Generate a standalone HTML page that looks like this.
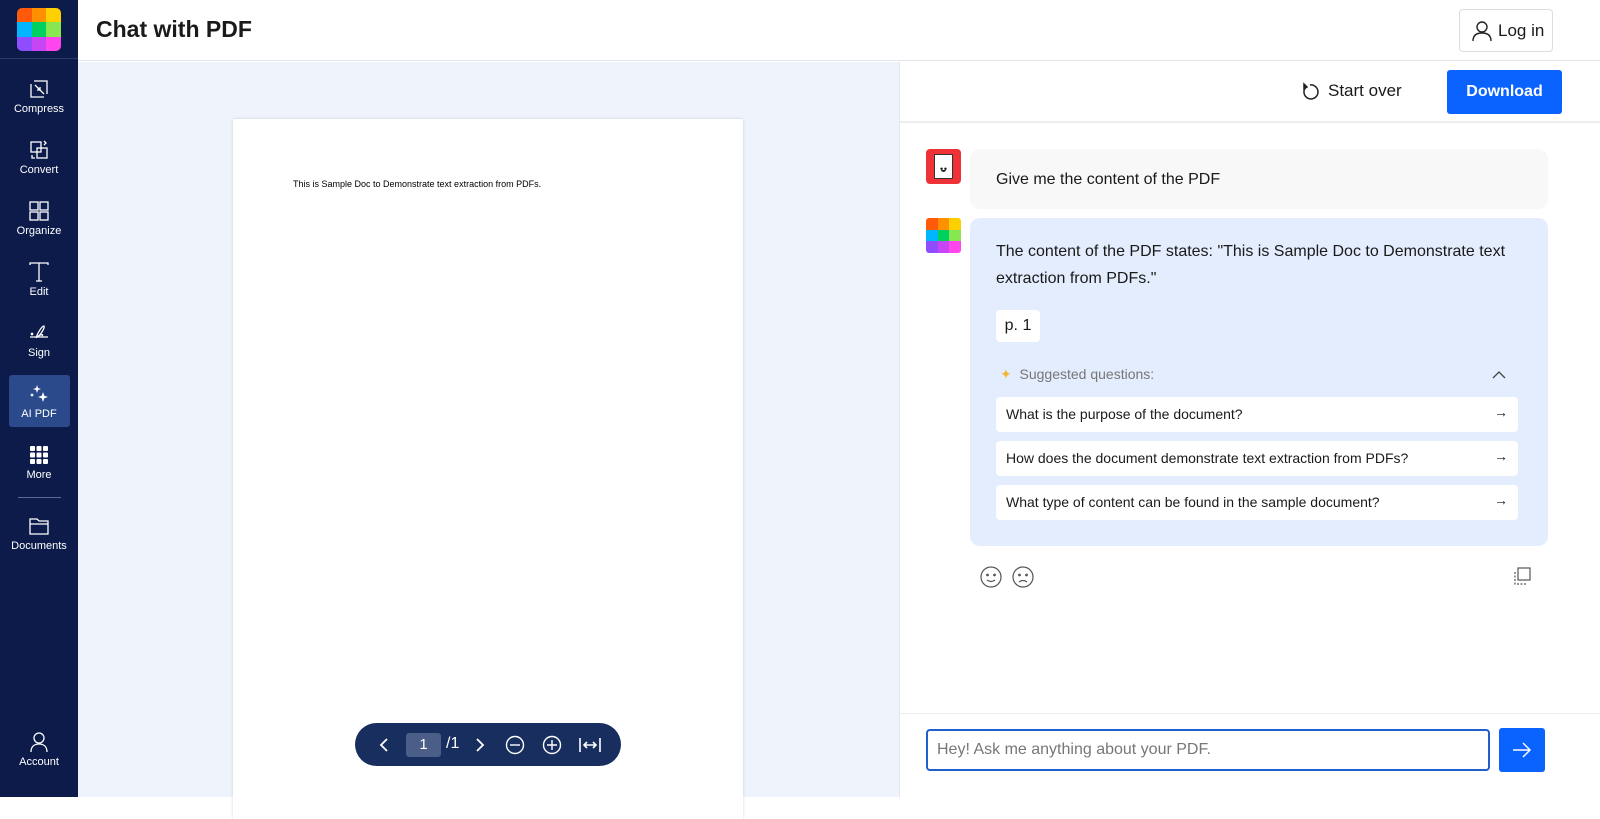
<!DOCTYPE html>
<html><head><meta charset="utf-8"><style>
*{box-sizing:border-box;margin:0;padding:0}
body{width:1600px;height:797px;overflow:hidden;font-family:"Liberation Sans",sans-serif;background:#fff;position:relative;color:#1a1a1a}
.sb{position:absolute;left:0;top:0;width:78px;height:797px;background:#0d1b4b;color:#fff}
.logo{position:absolute;left:17px;top:8px;width:44px;height:43px;border-radius:5px;overflow:hidden;display:grid;grid-template-columns:repeat(3,1fr)}
.sbline{position:absolute;left:0;top:58px;width:78px;height:1px;background:#2a3a6a}
.it{position:absolute;left:0;width:78px;text-align:center;font-size:11px}
.it svg{display:block;margin:0 auto 3px}
.act{position:absolute;left:9px;top:375px;width:61px;height:52px;background:#2b4a8c;border-radius:3px}
.hdr{position:absolute;left:78px;top:0;right:0;height:61px;background:#fff;border-bottom:1px solid #e3e6ec}
.hdr h1{position:absolute;left:18px;top:16px;font-size:23px;font-weight:bold}
.login{position:absolute;right:47px;top:9px;width:94px;height:43px;border:1px solid #ddd;border-radius:4px;font-size:17px;padding:11px 0 0 38px}
.view{position:absolute;left:78px;top:62px;width:821px;height:735px;background:#eff4fc}
.page{position:absolute;left:155px;top:57px;width:510px;height:700px;background:#fff;box-shadow:0 0 3px rgba(0,0,0,.15)}
.page p{position:absolute;left:60px;top:60px;font-size:9px;color:#000}
.tb{position:absolute;left:277px;top:661px;width:266px;height:43px;border-radius:22px;background:#172e5e;color:#fff}
.rp{position:absolute;left:899px;top:62px;right:0;height:735px;background:#fff;border-left:1px solid #e3e6ec}
.bar{position:absolute;left:0;top:0;right:0;height:61px;border-bottom:2px solid #eceef2}
.dl{position:absolute;left:547px;top:8px;width:115px;height:44px;background:#0a62ff;border-radius:3px;color:#fff;font-weight:bold;font-size:16px;text-align:center;line-height:44px}
.so{position:absolute;left:428px;top:19px;font-size:17px}
.msg1{position:absolute;left:70px;top:87px;width:578px;height:60px;background:#f8f8f8;border-radius:10px;font-size:16px;padding:22px 26px}
.msg2{position:absolute;left:70px;top:156px;width:578px;height:328px;background:#e3edfd;border-radius:10px;font-size:16px}
.q{position:absolute;left:26px;width:522px;height:35px;background:#fff;border-radius:4px;font-size:14px;padding:9px 10px}
.q span{position:absolute;right:10px;top:7px}
.inp{position:absolute;left:26px;top:667px;width:564px;height:42px;border:2px solid #1f5fd0;border-radius:4px;font-size:16px;color:#777;padding:10px 9px}
.send{position:absolute;left:599px;top:666px;width:46px;height:44px;background:#0a62ff;border-radius:3px}
.foot{position:absolute;left:0;top:651px;right:0;height:1px;background:#eceef2}
</style></head><body>
<div class="sb">
<div class="logo"><i style="background:#ff5a0a"></i><i style="background:#ff9000"></i><i style="background:#ffd000"></i><i style="background:#00b6ff"></i><i style="background:#00d060"></i><i style="background:#88e650"></i><i style="background:#8f4dff"></i><i style="background:#c845f5"></i><i style="background:#ff45ee"></i></div>
<div class="sbline"></div>
<div class="act"></div>
<div class="it" style="top:78px"><svg width="22" height="22" viewBox="0 0 22 22" fill="none" stroke="#fff" stroke-width="1.3"><path d="M3 6V19H16M6 3H19V16M7 7L12 12M12 9V12H9M16 16L11 11"/></svg>Compress</div>
<div class="it" style="top:139px"><svg width="22" height="22" viewBox="0 0 22 22" fill="none" stroke="#fff" stroke-width="1.3"><rect x="3" y="3" width="10" height="10"/><rect x="9" y="9" width="10" height="10"/><path d="M16 2L18 4L16 6M4 16L4 19H7"/></svg>Convert</div>
<div class="it" style="top:200px"><svg width="22" height="22" viewBox="0 0 22 22" fill="none" stroke="#fff" stroke-width="1.3"><rect x="2" y="2" width="8" height="8"/><rect x="12" y="2" width="8" height="8"/><rect x="2" y="12" width="8" height="8"/><rect x="12" y="12" width="8" height="8"/></svg>Organize</div>
<div class="it" style="top:261px"><svg width="22" height="22" viewBox="0 0 22 22" fill="none" stroke="#fff" stroke-width="1.3"><path d="M2 4V2H20V4M11 2V20M8 20H14"/></svg>Edit</div>
<div class="it" style="top:322px"><svg width="22" height="22" viewBox="0 0 22 22" fill="none" stroke="#fff" stroke-width="1.3"><path d="M2 15H20M3 11L5 13M5 11L3 13M8 16C10 10 14 4 16 4C17 6 12 14 9 15C13 12 16 12 14 14"/></svg>Sign</div>
<div class="it" style="top:383px"><svg width="22" height="22" viewBox="0 0 22 22" fill="#fff"><path d="M9 2l1 3 3 1-3 1-1 3-1-3-3-1 3-1zM15 9l1.3 3.7 3.7 1.3-3.7 1.3L15 19l-1.3-3.7L10 14l3.7-1.3zM4 10l.7 1.3L6 12l-1.3.7L4 14l-.7-1.3L2 12l1.3-.7z"/></svg>AI PDF</div>
<div class="it" style="top:444px"><svg width="22" height="22" viewBox="0 0 22 22" fill="#fff"><rect x="2" y="2" width="5" height="5" rx="1"/><rect x="8.5" y="2" width="5" height="5" rx="1"/><rect x="15" y="2" width="5" height="5" rx="1"/><rect x="2" y="8.5" width="5" height="5" rx="1"/><rect x="8.5" y="8.5" width="5" height="5" rx="1"/><rect x="15" y="8.5" width="5" height="5" rx="1"/><rect x="2" y="15" width="5" height="5" rx="1"/><rect x="8.5" y="15" width="5" height="5" rx="1"/><rect x="15" y="15" width="5" height="5" rx="1"/></svg>More</div>
<div style="position:absolute;left:18px;top:497px;width:43px;height:1px;background:#5a6a90"></div>
<div class="it" style="top:515px"><svg width="22" height="22" viewBox="0 0 22 22" fill="none" stroke="#fff" stroke-width="1.3"><path d="M2 4H9L11 6H20V19H2ZM2 9H20"/></svg>Documents</div>
<div class="it" style="top:731px"><svg width="22" height="22" viewBox="0 0 22 22" fill="none" stroke="#fff" stroke-width="1.3"><circle cx="11" cy="7" r="5"/><path d="M3 21C3 15 7 13 11 13S19 15 19 21"/></svg>Account</div>
</div>
<div class="hdr"><h1>Chat with PDF</h1>
<div class="login"><svg style="position:absolute;left:12px;top:10px" width="20" height="22" viewBox="0 0 20 22" fill="none" stroke="#222" stroke-width="1.4"><circle cx="10" cy="7" r="5"/><path d="M1 21C1 15 5 13 10 13S19 15 19 21"/></svg>Log in</div></div>
<div class="view"><div class="page"><p>This is Sample Doc to Demonstrate text extraction from PDFs.</p></div>
<div class="tb">
<svg style="position:absolute;left:24px;top:14px" width="10" height="16" viewBox="0 0 10 16" fill="none" stroke="#fff" stroke-width="1.8"><path d="M8 2L2 8L8 14"/></svg>
<div style="position:absolute;left:51px;top:10px;width:35px;height:24px;background:#4a5e88;border-radius:3px;text-align:center;line-height:24px;font-size:15px">1</div>
<div style="position:absolute;left:91px;top:12px;font-size:16px">/1</div>
<svg style="position:absolute;left:120px;top:14px" width="10" height="16" viewBox="0 0 10 16" fill="none" stroke="#fff" stroke-width="1.8"><path d="M2 2L8 8L2 14"/></svg>
<svg style="position:absolute;left:150px;top:12px" width="20" height="20" viewBox="0 0 20 20" fill="none" stroke="#fff" stroke-width="1.4"><circle cx="10" cy="10" r="8.5"/><path d="M5 10H15"/></svg>
<svg style="position:absolute;left:187px;top:12px" width="20" height="20" viewBox="0 0 20 20" fill="none" stroke="#fff" stroke-width="1.4"><circle cx="10" cy="10" r="8.5"/><path d="M5 10H15M10 5V15"/></svg>
<svg style="position:absolute;left:224px;top:13px" width="22" height="18" viewBox="0 0 22 18" fill="none" stroke="#fff" stroke-width="1.6"><path d="M1 2V16M21 2V16M5 9H17M8 6L5 9L8 12M14 6L17 9L14 12"/></svg>
</div></div>
<div class="rp">
<div class="bar"><div class="so"><svg style="position:absolute;left:-28px;top:1px" width="20" height="20" viewBox="0 0 20 20" fill="none" stroke="#222" stroke-width="1.5"><path d="M6 5A7 7 0 1 0 10 3"/><path d="M4 2L7 5L4 7Z" fill="#222"/></svg>Start over</div><div class="dl">Download</div></div>
<div style="position:absolute;left:26px;top:87px;width:35px;height:35px;background:#ee3237;border-radius:4px"><div style="position:absolute;left:8px;top:5px;width:19px;height:25px;background:#fff;border:1px solid #333;border-radius:1px"><div style="position:absolute;left:5px;top:10px;font-size:9px;line-height:9px">&#8226;&#8202;&#8226;</div><div style="position:absolute;left:6px;top:14px;width:5px;height:3px;border-bottom:2px solid #222;border-radius:0 0 4px 4px"></div></div></div>
<div style="position:absolute;left:26px;top:156px;width:35px;height:35px;border-radius:3px;overflow:hidden;display:grid;grid-template-columns:repeat(3,1fr)"><i style="background:#ff5a0a"></i><i style="background:#ff9000"></i><i style="background:#ffd000"></i><i style="background:#00b6ff"></i><i style="background:#00d060"></i><i style="background:#88e650"></i><i style="background:#8f4dff"></i><i style="background:#c845f5"></i><i style="background:#ff45ee"></i></div>
<div class="msg1">Give me the content of the PDF</div>
<div class="msg2">
<div style="position:absolute;left:26px;top:20px;line-height:27px;width:520px">The content of the PDF states: "This is Sample Doc to Demonstrate text extraction from PDFs."</div>
<div style="position:absolute;left:26px;top:92px;width:44px;height:32px;background:#fff;border-radius:4px;text-align:center;line-height:32px">p. 1</div>
<div style="position:absolute;left:30px;top:148px;font-size:14px;color:#777"><span style="color:#f5b731">&#10022;</span>&nbsp; Suggested questions:</div>
<svg style="position:absolute;left:522px;top:152px" width="14" height="9" viewBox="0 0 14 9" fill="none" stroke="#444" stroke-width="1.3"><path d="M1 8L7 2L13 8"/></svg>
<div class="q" style="top:179px">What is the purpose of the document?<span>&rarr;</span></div>
<div class="q" style="top:223px">How does the document demonstrate text extraction from PDFs?<span>&rarr;</span></div>
<div class="q" style="top:267px">What type of content can be found in the sample document?<span>&rarr;</span></div>
</div>
<svg style="position:absolute;left:80px;top:504px" width="56" height="22" viewBox="0 0 56 22" fill="none" stroke="#555" stroke-width="1.2"><circle cx="11" cy="11" r="10"/><circle cx="43" cy="11" r="10"/><circle cx="7.5" cy="9" r=".8" fill="#555"/><circle cx="14.5" cy="9" r=".8" fill="#555"/><circle cx="39.5" cy="9" r=".8" fill="#555"/><circle cx="46.5" cy="9" r=".8" fill="#555"/><path d="M7 14Q11 17 15 14M39 16Q43 13 47 16"/></svg>
<svg style="position:absolute;left:612px;top:504px" width="20" height="20" viewBox="0 0 20 20" fill="none" stroke="#555" stroke-width="1.2"><rect x="6" y="2" width="12" height="12"/><path d="M3 6V18H15" stroke-dasharray="2 1.5"/></svg>
<div class="foot"></div>
<div class="inp">Hey! Ask me anything about your PDF.</div>
<div class="send"><svg style="position:absolute;left:13px;top:13px" width="20" height="18" viewBox="0 0 20 18" fill="none" stroke="#fff" stroke-width="1.5"><path d="M1 9H18M11 2L18 9L11 16"/></svg></div>
</div>
</body></html>
